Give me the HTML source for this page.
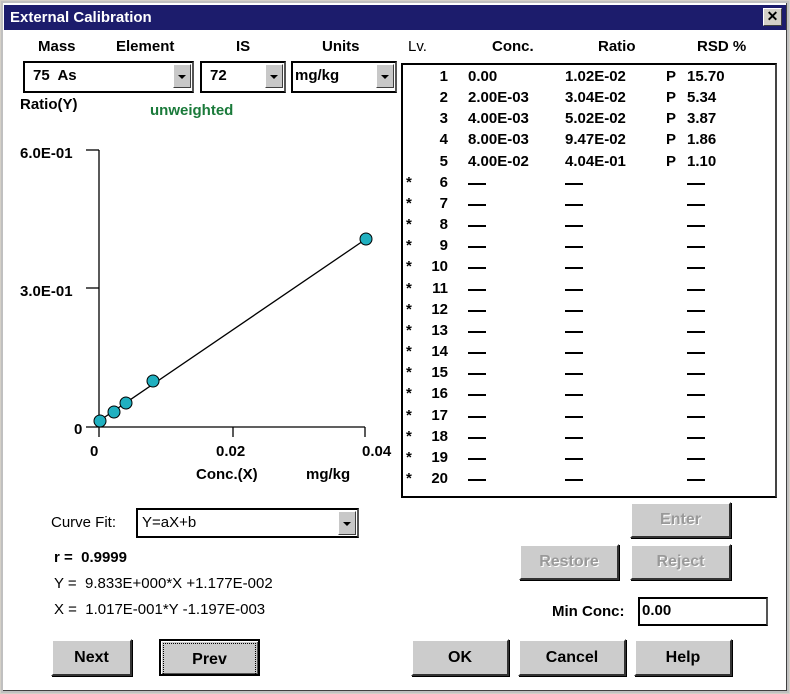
<!DOCTYPE html>
<html><head><style>
*{margin:0;padding:0;box-sizing:border-box}
body{width:790px;height:694px;background:#d4d0c8;font-family:"Liberation Sans",sans-serif;font-weight:bold;font-size:15px;color:#000;position:relative;overflow:hidden}
.win{position:absolute;left:1px;top:1px;width:788px;height:692px;background:#fff;border:2px solid #c0c0c0;box-shadow:inset -1px -1px #404040}
.title{position:absolute;left:4px;top:5px;width:782px;height:25px;background:#1c1c6c;color:#fff;font-size:15px;line-height:25px;padding-left:6px}
.close{position:absolute;left:763px;top:8px;width:19px;height:18px;background:#d4d0c8;border:1px solid;border-color:#fff #404040 #404040 #fff;color:#000;font-size:14px;line-height:15px;text-align:center}
.a{position:absolute;white-space:nowrap}
.dd{position:absolute;border:2px solid #000;border-right-color:#555;background:#fff;padding-left:8px;line-height:26px}
.arr{position:absolute;right:1px;top:1px;width:18px;height:24px;background:#c8c8c8;border:1px solid;border-color:#fff #404040 #404040 #fff}
.arr:after{content:"";position:absolute;left:4px;top:10px;border-left:4px solid transparent;border-right:4px solid transparent;border-top:4px solid #000}
.btn{position:absolute;background:#ccc;border:2px solid;border-color:#fff #333 #333 #fff;box-shadow:1px 1px #000;text-align:center;font-size:16px}
.dis{color:#999;text-shadow:1px 1px #fff}
.tbl{position:absolute;left:401px;top:63px;width:376px;height:435px;border:2px solid #000;border-right-color:#444;background:#fff}
</style></head><body>
<div class="win"></div>
<div class="title">External Calibration</div>
<div class="close">✕</div>

<div class="a" style="left:38px;top:38px">Mass</div>
<div class="a" style="left:116px;top:38px">Element</div>
<div class="a" style="left:236px;top:38px">IS</div>
<div class="a" style="left:322px;top:38px">Units</div>
<div class="dd" style="left:23px;top:61px;width:171px;height:32px">75&nbsp; As<div class="arr"></div></div>
<div class="dd" style="left:200px;top:61px;width:86px;height:32px">72<div class="arr"></div></div>
<div class="dd" style="left:291px;top:61px;width:106px;height:32px;padding-left:2px">mg/kg<div class="arr"></div></div>
<div class="a" style="left:20px;top:96px">Ratio(Y)</div>
<div class="a" style="left:150px;top:102px;color:#1a7a3a">unweighted</div>

<svg class="a" style="left:0;top:130px" width="400" height="370">
<g stroke="#000" stroke-width="1.3" fill="none">
<line x1="99" y1="20" x2="99" y2="297"/><line x1="86" y1="20" x2="99" y2="20"/><line x1="86" y1="158" x2="99" y2="158"/>
<line x1="86" y1="297" x2="365" y2="297"/>
<line x1="99" y1="297" x2="99" y2="307"/><line x1="233" y1="297" x2="233" y2="307"/><line x1="365" y1="297" x2="365" y2="307"/>
<line x1="99" y1="291" x2="366" y2="109"/>
</g>
<g fill="#20b0c0" stroke="#000" stroke-width="1">
<circle cx="100" cy="291" r="6"/><circle cx="114" cy="282" r="6"/><circle cx="126" cy="273" r="6"/><circle cx="153" cy="251" r="6"/><circle cx="366" cy="109" r="6"/>
</g>
</svg>
<div class="a" style="left:20px;top:145px">6.0E-01</div>
<div class="a" style="left:20px;top:283px">3.0E-01</div>
<div class="a" style="left:74px;top:421px">0</div>
<div class="a" style="left:90px;top:443px">0</div>
<div class="a" style="left:216px;top:443px">0.02</div>
<div class="a" style="left:362px;top:443px">0.04</div>
<div class="a" style="left:196px;top:466px">Conc.(X)</div>
<div class="a" style="left:306px;top:466px">mg/kg</div>

<div class="a" style="left:408px;top:38px;font-weight:normal">Lv.</div>
<div class="a" style="left:492px;top:38px">Conc.</div>
<div class="a" style="left:598px;top:38px">Ratio</div>
<div class="a" style="left:697px;top:38px">RSD %</div>
<div class="tbl"></div>
<div id="rows"></div>
<script>
var d=[["0.00","1.02E-02","15.70"],["2.00E-03","3.04E-02","5.34"],["4.00E-03","5.02E-02","3.87"],["8.00E-03","9.47E-02","1.86"],["4.00E-02","4.04E-01","1.10"]];
var h="";
for(var i=0;i<20;i++){var y=68+i*21.16;
 if(i<5){h+='<div class="a" style="left:420px;width:28px;text-align:right;top:'+y+'px">'+(i+1)+'</div><div class="a" style="left:468px;top:'+y+'px">'+d[i][0]+'</div><div class="a" style="left:565px;top:'+y+'px">'+d[i][1]+'</div><div class="a" style="left:666px;top:'+y+'px">P</div><div class="a" style="left:687px;top:'+y+'px">'+d[i][2]+'</div>';}
 else{h+='<div class="a" style="left:406px;top:'+y+'px">*</div><div class="a" style="left:420px;width:28px;text-align:right;top:'+y+'px">'+(i+1)+'</div>';
 [468,565,687].forEach(function(x){h+='<div class="a" style="left:'+x+'px;top:'+(y+9)+'px;width:18px;height:2px;background:#000"></div>';});}
}
document.getElementById("rows").innerHTML=h;
</script>

<div class="a" style="left:51px;top:514px;font-weight:normal">Curve Fit:</div>
<div class="dd" style="left:136px;top:508px;width:223px;height:30px;padding-left:4px;line-height:25px;font-weight:normal">Y=aX+b<div class="arr" style="height:24px"></div></div>
<div class="a" style="left:54px;top:549px">r =&nbsp; 0.9999</div>
<div class="a" style="left:54px;top:575px;font-weight:normal">Y =&nbsp; 9.833E+000*X +1.177E-002</div>
<div class="a" style="left:54px;top:601px;font-weight:normal">X =&nbsp; 1.017E-001*Y -1.197E-003</div>

<div class="btn dis" style="left:630px;top:502px;width:101px;height:36px;line-height:32px">Enter</div>
<div class="btn dis" style="left:519px;top:544px;width:100px;height:36px;line-height:32px">Restore</div>
<div class="btn dis" style="left:630px;top:544px;width:101px;height:36px;line-height:32px">Reject</div>
<div class="a" style="left:552px;top:603px">Min Conc:</div>
<div class="dd" style="left:638px;top:597px;width:130px;height:29px;padding-left:2px;line-height:24px">0.00</div>

<div class="btn" style="left:51px;top:639px;width:81px;height:37px;line-height:33px">Next</div>
<div class="btn" style="left:159px;top:639px;width:101px;height:37px;line-height:31px;border:2px solid #000;box-shadow:inset 1px 1px #fff,inset -1px -1px #555"><span style="display:block;margin:2px;border:1px dotted #000">Prev</span></div>
<div class="btn" style="left:411px;top:639px;width:98px;height:37px;line-height:33px">OK</div>
<div class="btn" style="left:518px;top:639px;width:108px;height:37px;line-height:33px">Cancel</div>
<div class="btn" style="left:634px;top:639px;width:98px;height:37px;line-height:33px">Help</div>
</body></html>
